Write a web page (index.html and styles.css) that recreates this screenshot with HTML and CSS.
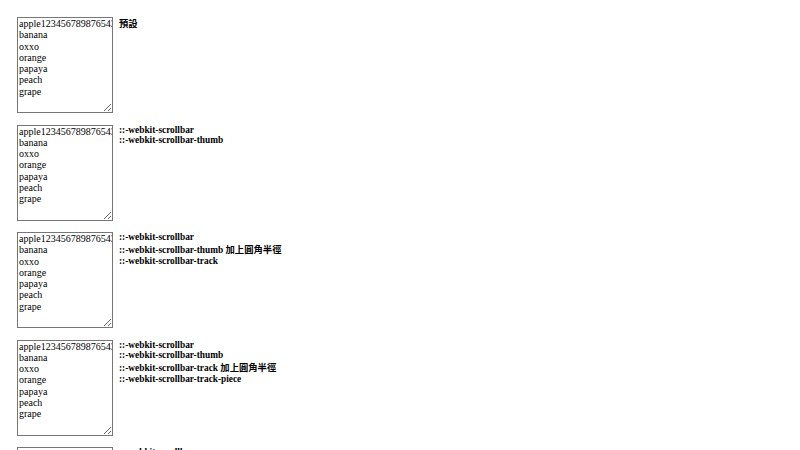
FILE: index.html
```html
<!DOCTYPE html>
<html>
<head>
<meta charset="utf-8">
<link rel="stylesheet" href="styles.css">
</head>
<body>
<div class="list">
  <div class="item">
    <textarea class="box box-default" wrap="off">apple1234567898765432123456789
banana
oxxo
orange
papaya
peach
grape</textarea>
    <div class="notes"><div class="cjk">預設</div></div>
  </div>
  <div class="item">
    <textarea class="box" wrap="off">apple1234567898765432123456789
banana
oxxo
orange
papaya
peach
grape</textarea>
    <div class="notes">
      <div>::-webkit-scrollbar</div>
      <div>::-webkit-scrollbar-thumb</div>
    </div>
  </div>
  <div class="item">
    <textarea class="box" wrap="off">apple1234567898765432123456789
banana
oxxo
orange
papaya
peach
grape</textarea>
    <div class="notes">
      <div>::-webkit-scrollbar</div>
      <div>::-webkit-scrollbar-thumb <span class="cjk">加上圓角半徑</span></div>
      <div>::-webkit-scrollbar-track</div>
    </div>
  </div>
  <div class="item">
    <textarea class="box" wrap="off">apple1234567898765432123456789
banana
oxxo
orange
papaya
peach
grape</textarea>
    <div class="notes">
      <div>::-webkit-scrollbar</div>
      <div>::-webkit-scrollbar-thumb</div>
      <div>::-webkit-scrollbar-track <span class="cjk">加上圓角半徑</span></div>
      <div>::-webkit-scrollbar-track-piece</div>
    </div>
  </div>
  <div class="item">
    <textarea class="box" wrap="off">apple1234567898765432123456789
banana
oxxo
orange
papaya
peach
grape</textarea>
    <div class="notes">
      <div>::-webkit-scrollbar</div>
      <div>::-webkit-scrollbar-thumb</div>
      <div>::-webkit-scrollbar-track</div>
      <div>::-webkit-scrollbar-track-piece</div>
    </div>
  </div>
</div>
</body>
</html>
```

FILE: styles.css
```css
html, body {
  margin: 0;
  padding: 0;
  background: #ffffff;
}

body {
  font-family: "Liberation Serif", "Times New Roman", serif;
  color: #000;
}

.list {
  display: flex;
  flex-direction: column;
  padding: 17px 0 0 17px;
}

.item {
  display: flex;
  align-items: flex-start;
  gap: 6px;
  margin-bottom: 11.5px;
}

.box {
  box-sizing: border-box;
  width: 96px;
  height: 96px;
  margin: 0;
  padding: 0 0 0 1px;
  border: 1px solid #767676;
  font-family: "Liberation Serif", "Times New Roman", serif;
  font-size: 10px;
  line-height: 11.3px;
  color: #000;
  background: #fff;
  white-space: pre;
  overflow: hidden;
  flex: none;
}

.notes {
  font-weight: bold;
  font-size: 9.33px;
  line-height: 10.7px;
}

.cjk {
  font-family: "Noto Sans CJK TC", "Noto Sans CJK SC", sans-serif;
  font-weight: bold;
  line-height: 13.5px;
}
```
